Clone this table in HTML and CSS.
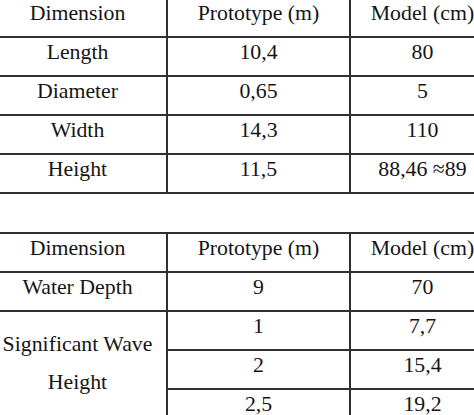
FILE: index.html
```html
<!DOCTYPE html>
<html>
<head>
<meta charset="utf-8">
<link rel="stylesheet" href="styles.css">
</head>
<body>
<div class="page">
  <table class="dims">
    <colgroup><col class="c1"><col class="c2"><col class="c3"></colgroup>
    <tr><td>Dimension</td><td>Prototype (m)</td><td>Model (cm)</td></tr>
    <tr><td>Length</td><td>10,4</td><td>80</td></tr>
    <tr><td>Diameter</td><td>0,65</td><td>5</td></tr>
    <tr><td>Width</td><td>14,3</td><td>110</td></tr>
    <tr><td>Height</td><td>11,5</td><td>88,46 ≈89</td></tr>
  </table>
  <table class="dims">
    <colgroup><col class="c1"><col class="c2"><col class="c3"></colgroup>
    <tr><td>Dimension</td><td>Prototype (m)</td><td>Model (cm)</td></tr>
    <tr><td>Water Depth</td><td>9</td><td>70</td></tr>
    <tr><td rowspan="3" class="multi">Significant Wave<br>Height</td><td>1</td><td>7,7</td></tr>
    <tr><td>2</td><td>15,4</td></tr>
    <tr><td>2,5</td><td>19,2</td></tr>
  </table>
</div>
</body>
</html>
```

FILE: styles.css
```css
html, body {
  margin: 0;
  padding: 0;
  background: #ffffff;
  overflow: hidden;
}

.page {
  display: flex;
  flex-direction: column;
  gap: 38px;
  margin: -3px 0 0 -13px;
  width: 520px;
}

.dims {
  border-collapse: collapse;
  table-layout: fixed;
  width: 507px;
  font-family: "Liberation Serif", "Times New Roman", serif;
  font-size: 21.8px;
  color: #151515;
}

.c1 { width: 179px; }
.c2 { width: 183px; }
.c3 { width: 145px; }

.dims td {
  border: 2px solid #303030;
  text-align: center;
  vertical-align: top;
  line-height: 28px;
  padding: 0 0 9px 0;
  white-space: nowrap;
}

.dims td.multi {
  vertical-align: middle;
  line-height: 37.5px;
  padding-bottom: 12px;
}
```
